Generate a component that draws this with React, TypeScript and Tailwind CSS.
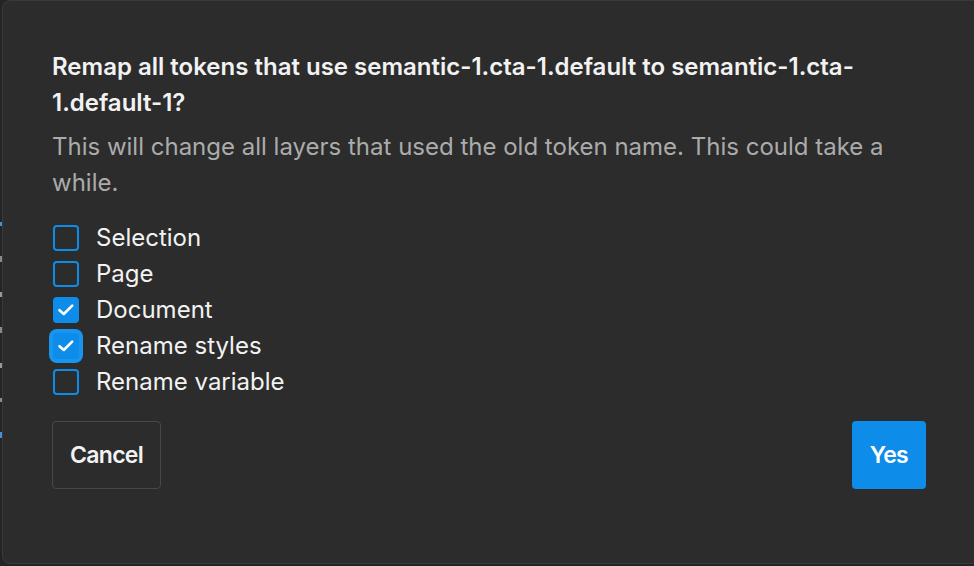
import React, { useState } from 'react';

type Option = { id: string; label: string };

const options: Option[] = [
    { id: 'selection', label: 'Selection' },
    { id: 'page', label: 'Page' },
    { id: 'document', label: 'Document' },
    { id: 'styles', label: 'Rename styles' },
    { id: 'variable', label: 'Rename variable' },
];

const CheckIcon: React.FC = () => (
    <svg width="20" height="20" viewBox="0 0 20 20" fill="none">
        <path d="M3.5 10.2 L7.8 14 L16.2 5.6" stroke="white" strokeWidth="2.6" strokeLinecap="round" strokeLinejoin="round" />
    </svg>
);

const App: React.FC = () => {
    const [checked, setChecked] = useState<Record<string, boolean>>({ document: true, styles: true });
    const focused = 'styles';

    const toggle = (id: string) => setChecked(c => ({ ...c, [id]: !c[id] }));

    return (
        <div className="h-[566px] w-[974px] overflow-hidden bg-[#242424] flex font-['Inter',sans-serif]">
            {/* sliver of the app behind the dialog */}
            <div className="w-[2px] shrink-0 flex flex-col pt-[222px] gap-[30px]">
                <div className="h-[4px] bg-[#4a8fd0]" />
                <div className="h-[6px] bg-[#8a8a8a]" />
                <div className="h-[5px] bg-[#9a9a9a]" />
                <div className="h-[6px] bg-[#8a8a8a]" />
                <div className="h-[5px] bg-[#9a9a9a]" />
                <div className="h-[4px] bg-[#8a8a8a]" />
                <div className="h-[6px] bg-[#4a8fd0]" />
            </div>
            <div className="h-[564px] flex-1 rounded-[8px] border border-[#3a3a3a] bg-[#2c2c2c] pt-[48px] pl-[49px] pr-[48px] -mr-[8px] text-[24px] leading-[36px]">
                <div className="w-[874px]">
                    <h2 className="font-semibold text-[#f2f2f2]">
                        Remap all tokens that use semantic-1.cta-1.default to semantic-1.cta-1.default-1?
                    </h2>
                    <p className="mt-[8px] text-[#ababab]">
                        This will change all layers that used the old token name. This could take a while.
                    </p>
                    <div className="mt-[19px] flex flex-col">
                        {options.map(opt => {
                            const isOn = !!checked[opt.id];
                            const isFocused = opt.id === focused;
                            return (
                                <label key={opt.id} className="flex h-[36px] items-center cursor-pointer">
                                    <span
                                        onClick={() => toggle(opt.id)}
                                        className={
                                            'ml-[1px] flex h-[26px] w-[26px] items-center justify-center rounded-[4px] border-2 ' +
                                            (isOn ? 'border-[#0d8ce9] bg-[#0d8ce9] ' : 'border-[#0d8ce9] bg-transparent ') +
                                            (isFocused ? 'shadow-[0_0_0_4px_#1896ef]' : '')
                                        }
                                    >
                                        {isOn && <CheckIcon />}
                                    </span>
                                    <span className="ml-[17px] text-[#f2f2f2]">{opt.label}</span>
                                </label>
                            );
                        })}
                    </div>
                    <div className="mt-[21px] flex justify-between">
                        <button className="h-[68px] rounded-[4px] border-[1.5px] border-[#484848] px-[17px] text-[23px] font-semibold tracking-[-0.03em] text-[#f2f2f2]">
                            Cancel
                        </button>
                        <button className="h-[68px] rounded-[4px] bg-[#0d8ce9] px-[18px] text-[23px] font-semibold tracking-[-0.03em] text-white">
                            Yes
                        </button>
                    </div>
                </div>
            </div>
        </div>
    );
};

export default App;
